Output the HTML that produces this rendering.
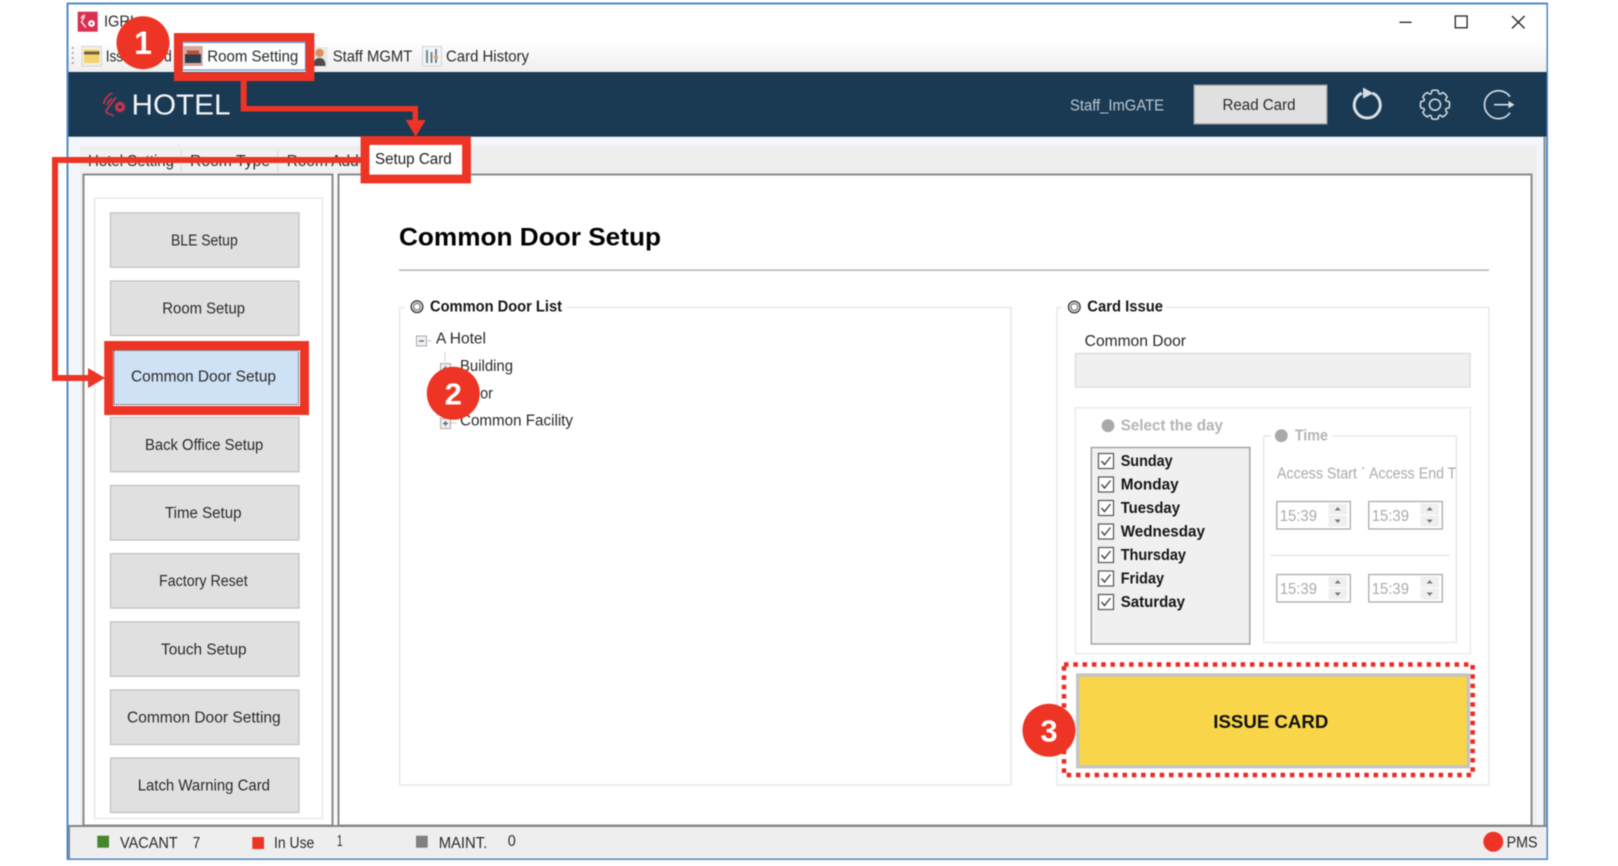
<!DOCTYPE html>
<html lang="en"><head><meta charset="utf-8"><title>Common Door Setup</title>
<style>
html,body{margin:0;padding:0;background:#fff;width:1618px;height:866px;overflow:hidden}
svg{display:block;filter:blur(.45px)}
text{font-family:"Liberation Sans","Noto Sans CJK KR",sans-serif;font-size:15.5px;fill:#2a2a2a}
.b{font-weight:bold;fill:#161616}
.g{fill:#aaa}
</style></head><body>
<svg width="1618" height="866" viewBox="0 0 1618 866" xmlns="http://www.w3.org/2000/svg">
<defs>
<linearGradient id="tb" x1="0" y1="0" x2="0" y2="1"><stop offset="0" stop-color="#fff"/><stop offset="1" stop-color="#eeeeee"/></linearGradient>
<clipPath id="tc"><rect x="1264" y="455" width="192" height="35"/></clipPath>
</defs>
<!-- window -->
<rect x="67.500" y="3.500" width="1479.500" height="855.500" fill="#f3f6fc" stroke="#4080c6" stroke-width="1.800"/>
<rect x="68.500" y="4.500" width="1478" height="37" fill="#fff"/>
<rect x="68.500" y="41" width="1478" height="31" fill="url(#tb)"/>
<rect x="68.500" y="72" width="1478" height="64.700" fill="#1a3a54"/>
<rect x="1543.500" y="137" width="2" height="688" fill="#8d8d8d"/>
<rect x="80" y="146" width="1456.700" height="679" fill="#eeeeee"/>
<!-- title bar -->
<rect x="77.700" y="11.700" width="20" height="20" fill="#d9304f"/>
<path d="M84.500 16.500l-3 5.500 4.500 5.500M81 18.500l2.500-3.500M84 15l1 .5" stroke="#fff" stroke-width="1.300" fill="none"/>
<circle cx="91.500" cy="23.500" r="3.400" fill="#fff"/><circle cx="91.500" cy="23.500" r="1.100" fill="#d9304f"/>
<text x="104" y="26.500" textLength="30" lengthAdjust="spacingAndGlyphs">IGRI</text>
<path d="M1399.400 22.300h12.200" stroke="#222" stroke-width="1.300"/>
<rect x="1455.300" y="16" width="11.800" height="11.800" fill="none" stroke="#222" stroke-width="1.300"/>
<path d="M1512 16l12.600 12.400M1524.600 16l-12.600 12.400" stroke="#222" stroke-width="1.300"/>
<!-- toolbar -->
<g fill="#aaa"><rect x="71.700" y="47" width="2" height="2"/><rect x="71.700" y="52" width="2" height="2"/><rect x="71.700" y="57" width="2" height="2"/><rect x="71.700" y="62" width="2" height="2"/></g>
<rect x="82" y="46.500" width="19.500" height="19.500" fill="#f4f1e2" stroke="#d5d5d5"/>
<rect x="84" y="49.500" width="15.500" height="13.500" fill="#f3d36b"/><rect x="84" y="51.500" width="15.500" height="3" fill="#6d6542"/>
<text x="105.700" y="61.500" textLength="66" lengthAdjust="spacingAndGlyphs">Issue Card</text>
<rect x="182.500" y="42.500" width="123" height="27.500" fill="#fdfeff" stroke="#5b9bd5" stroke-width="1.200"/>
<rect x="183.300" y="46" width="19.400" height="20" fill="#d9a89e"/>
<rect x="185" y="54" width="16" height="9" fill="#2c3e50"/><rect x="187" y="50.500" width="12" height="4" fill="#b4503c"/>
<text x="207.300" y="61.500" textLength="91" lengthAdjust="spacingAndGlyphs">Room Setting</text>
<rect x="312" y="47" width="15.500" height="19.500" fill="#e9e7e4"/>
<circle cx="319.500" cy="53" r="4.200" fill="#d9905c"/><path d="M313.500 66q0-8 6-8t6 8z" fill="#4c4a4e"/>
<text x="332.700" y="61.500" textLength="79.600" lengthAdjust="spacingAndGlyphs">Staff MGMT</text>
<rect x="422.500" y="46.500" width="19" height="19.500" fill="#f2f5f5" stroke="#d2d2d2"/>
<path d="M427 50v13M431.500 52v11M436 49v14" stroke="#5d7f90" stroke-width="1.800"/><circle cx="436" cy="57" r="2" fill="#e69a55"/>
<text x="446" y="61.500" textLength="83" lengthAdjust="spacingAndGlyphs">Card History</text>
<!-- header -->
<g fill="none" stroke="#c6334f" stroke-width="1.700">
<path d="M103.500 104q2-8 9-11M107 105q1.500-4 5-6.500"/>
<path d="M116 97l-9.500 13q-1 2.500 1.500 3.500l6 2.500"/>
</g>
<circle cx="120" cy="107" r="5.200" fill="#c6334f"/><circle cx="120" cy="107" r="1.800" fill="#1a3a54"/>
<text x="131.500" y="114.300" textLength="99" lengthAdjust="spacingAndGlyphs" style="font-size:29px;fill:#f1f4f6">HOTEL</text>
<text x="1070" y="110.500" textLength="94" lengthAdjust="spacingAndGlyphs" style="fill:#bcc7d0">Staff_ImGATE</text>
<rect x="1194.200" y="85.200" width="132.600" height="38.600" fill="#e0e0e0" stroke="#a8a8a8" stroke-width="1.300"/>
<text x="1222.500" y="109.800" textLength="73" lengthAdjust="spacingAndGlyphs">Read Card</text>
<path d="M1372.500 93.100A13 13 0 1 1 1362 93.100" fill="none" stroke="#d7dfe4" stroke-width="3"/>
<path d="M1363 87.500l10.500 5.800-10.500 5.200z" fill="#d7dfe4"/>
<g transform="translate(1435 104.700)" fill="none" stroke="#d7dfe4" stroke-width="1.500" stroke-linejoin="round">
<circle r="5.500"/>
<path d="M10.600-4.400Q11.500-3.200 14-3.300Q15.200 0 14 3.300Q11.500 3.200 10.600 4.400"/>
<path transform="rotate(45)" d="M10.600-4.400Q11.500-3.200 14-3.300Q15.200 0 14 3.300Q11.500 3.200 10.600 4.400"/>
<path transform="rotate(90)" d="M10.600-4.400Q11.500-3.200 14-3.300Q15.200 0 14 3.300Q11.500 3.200 10.600 4.400"/>
<path transform="rotate(135)" d="M10.600-4.400Q11.500-3.200 14-3.300Q15.200 0 14 3.300Q11.500 3.200 10.600 4.400"/>
<path transform="rotate(180)" d="M10.600-4.400Q11.500-3.200 14-3.300Q15.200 0 14 3.300Q11.500 3.200 10.600 4.400"/>
<path transform="rotate(225)" d="M10.600-4.400Q11.500-3.200 14-3.300Q15.200 0 14 3.300Q11.500 3.200 10.600 4.400"/>
<path transform="rotate(270)" d="M10.600-4.400Q11.500-3.200 14-3.300Q15.200 0 14 3.300Q11.500 3.200 10.600 4.400"/>
<path transform="rotate(315)" d="M10.600-4.400Q11.500-3.200 14-3.300Q15.200 0 14 3.300Q11.500 3.200 10.600 4.400"/>
</g>
<path d="M1510 96.700A14 14 0 1 0 1510 112.700" fill="none" stroke="#d7dfe4" stroke-width="1.600"/>
<path d="M1494 104.700h15" stroke="#d7dfe4" stroke-width="1.600"/><path d="M1508.500 101l6 3.700-6 3.700z" fill="#d7dfe4"/>
<!-- tabs -->
<rect x="81" y="150" width="280" height="23" fill="#f1f1f1"/>
<path d="M181.300 150v23M277.700 150v23" stroke="#dedede" stroke-width="1.200"/>
<text x="88" y="166" textLength="86" lengthAdjust="spacingAndGlyphs">Hotel Setting</text>
<text x="190" y="166" textLength="80" lengthAdjust="spacingAndGlyphs">Room Type</text>
<text x="286.700" y="166" textLength="72" lengthAdjust="spacingAndGlyphs">Room Add</text>
<!-- panels -->
<rect x="333" y="173" width="6" height="652" fill="#f8f8f8"/>
<rect x="83.500" y="174.500" width="249" height="651" fill="#fff" stroke="#868686" stroke-width="1.900"/>
<rect x="338.500" y="174.500" width="1193" height="651" fill="#fff" stroke="#868686" stroke-width="1.900"/>
<rect x="94.800" y="198" width="227.500" height="620.500" fill="#fff" stroke="#e6e6e6" stroke-width="1.300"/>
<!-- left buttons -->
<g fill="#e0e0e0" stroke="#c0c0c0" stroke-width="1.200">
<rect x="110.500" y="212.800" width="188.500" height="54.500"/>
<rect x="110.500" y="281" width="188.500" height="54.500"/>
<rect x="110.500" y="417.300" width="188.500" height="54.500"/>
<rect x="110.500" y="485.500" width="188.500" height="54.500"/>
<rect x="110.500" y="553.600" width="188.500" height="54.500"/>
<rect x="110.500" y="621.800" width="188.500" height="54.500"/>
<rect x="110.500" y="690" width="188.500" height="54.500"/>
<rect x="110.500" y="758" width="188.500" height="54.500"/>
</g>
<rect x="113.500" y="350" width="185.500" height="55" fill="#cfe2f5"/>
<rect x="114" y="350.500" width="184.500" height="54" fill="none" stroke="#333" stroke-width="1" stroke-dasharray="1 1"/>
<text x="171" y="245.500" textLength="66.700" lengthAdjust="spacingAndGlyphs">BLE Setup</text>
<text x="162.300" y="313.500" textLength="82.700" lengthAdjust="spacingAndGlyphs">Room Setup</text>
<text x="131" y="381.700" textLength="145" lengthAdjust="spacingAndGlyphs">Common Door Setup</text>
<text x="145" y="449.800" textLength="118.300" lengthAdjust="spacingAndGlyphs">Back Office Setup</text>
<text x="165" y="518" textLength="76.500" lengthAdjust="spacingAndGlyphs">Time Setup</text>
<text x="159" y="586" textLength="88.700" lengthAdjust="spacingAndGlyphs">Factory Reset</text>
<text x="161" y="654.300" textLength="85.600" lengthAdjust="spacingAndGlyphs">Touch Setup</text>
<text x="127" y="722.400" textLength="153.700" lengthAdjust="spacingAndGlyphs">Common Door Setting</text>
<text x="137.700" y="790.500" textLength="132.300" lengthAdjust="spacingAndGlyphs">Latch Warning Card</text>
<!-- heading -->
<text x="399" y="245.500" textLength="262" lengthAdjust="spacingAndGlyphs" class="b" style="font-size:25px;fill:#000">Common Door Setup</text>
<rect x="399" y="269.300" width="1090" height="1.700" fill="#bdbdbd"/>
<!-- common door list group -->
<rect x="399.800" y="307.500" width="611.200" height="477.500" fill="#fff" stroke="#e6e6e6" stroke-width="1.300"/>
<rect x="405" y="300" width="161" height="14" fill="#fff"/>
<circle cx="417" cy="306.700" r="5.800" fill="none" stroke="#444" stroke-width="1.500"/><circle cx="417" cy="306.700" r="3.400" fill="none" stroke="#777" stroke-width="1.300"/>
<text x="430" y="311.500" textLength="132" lengthAdjust="spacingAndGlyphs" class="b">Common Door List</text>
<rect x="416.500" y="336" width="10" height="10" fill="#f0f0f4" stroke="#a9a9a9"/><path d="M419 341h5" stroke="#556" stroke-width="1.200"/>
<path d="M428 341h4" stroke="#999" stroke-dasharray="1 1"/>
<text x="436" y="343.500" textLength="50" lengthAdjust="spacingAndGlyphs">A Hotel</text>
<path d="M445 352v10" stroke="#aaa" stroke-dasharray="1 1"/>
<rect x="440.500" y="363.500" width="10" height="10" fill="#f0f0f4" stroke="#a9a9a9"/><path d="M443 368.500h5M445.500 366v5" stroke="#556" stroke-width="1.200"/>
<text x="460" y="371" textLength="53" lengthAdjust="spacingAndGlyphs">Building</text>
<text x="460" y="398.500" textLength="33" lengthAdjust="spacingAndGlyphs">Floor</text>
<rect x="440.500" y="418.500" width="10" height="10" fill="#f0f0f4" stroke="#a9a9a9"/><path d="M443 423.500h5M445.500 421v5" stroke="#556" stroke-width="1.200"/>
<path d="M451 423h6" stroke="#999" stroke-dasharray="1 1"/>
<text x="460" y="425.500" textLength="113" lengthAdjust="spacingAndGlyphs">Common Facility</text>
<!-- card issue group -->
<rect x="1057" y="307.500" width="432" height="477.500" fill="#fff" stroke="#e6e6e6" stroke-width="1.300"/>
<rect x="1062" y="300" width="104" height="14" fill="#fff"/>
<circle cx="1074.300" cy="307" r="5.800" fill="none" stroke="#444" stroke-width="1.500"/><circle cx="1074.300" cy="307" r="3.400" fill="none" stroke="#777" stroke-width="1.300"/>
<text x="1087.300" y="311.500" textLength="75.700" lengthAdjust="spacingAndGlyphs" class="b">Card Issue</text>
<text x="1084.700" y="346" textLength="101.300" lengthAdjust="spacingAndGlyphs">Common Door</text>
<rect x="1075.500" y="353.500" width="394.500" height="33.500" fill="#f0f0f0" stroke="#e0e0e0" stroke-width="1.600"/>
<rect x="1075.300" y="407.800" width="395" height="246" fill="#fff" stroke="#e8e8e8" stroke-width="1.300"/>
<circle cx="1108" cy="425.700" r="6.400" fill="#a9a9a9"/>
<text x="1120.700" y="430.500" textLength="102.300" lengthAdjust="spacingAndGlyphs" class="b" style="fill:#b5b5b5">Select the day</text>
<rect x="1263.800" y="436" width="192.500" height="206.500" fill="#fff" stroke="#e6e6e6" stroke-width="1.300"/>
<rect x="1271" y="429" width="61" height="14" fill="#fff"/>
<circle cx="1281.300" cy="435.700" r="6.400" fill="#a9a9a9"/>
<text x="1294.700" y="440.500" textLength="33.300" lengthAdjust="spacingAndGlyphs" class="b" style="fill:#b5b5b5">Time</text>
<text x="1277" y="478.500" textLength="80" lengthAdjust="spacingAndGlyphs" class="g">Access Start</text>
<rect x="1362.500" y="467" width="1.200" height="2.500" fill="#aaa"/>
<text x="1369" y="478.500" textLength="90" lengthAdjust="spacingAndGlyphs" class="g" clip-path="url(#tc)">Access End Ti</text>
<rect x="1270.300" y="554.700" width="179.400" height="1.300" fill="#e3e3e3"/>
<!-- spinners -->
<g>
<rect x="1276.800" y="501.500" width="73.500" height="27.500" fill="#fff" stroke="#a5a5a5" stroke-width="1.200"/>
<rect x="1328.500" y="503.500" width="18.500" height="11" fill="#efefef"/><rect x="1328.500" y="515.500" width="18.500" height="11" fill="#efefef"/>
<path d="M1337.700 507l-3 3.500h6zM1337.700 523l-3-3.500h6z" fill="#777"/>
<text x="1279.700" y="521" textLength="37.300" lengthAdjust="spacingAndGlyphs" class="g">15:39</text>
</g>
<g>
<rect x="1368.800" y="501.500" width="73.500" height="27.500" fill="#fff" stroke="#a5a5a5" stroke-width="1.200"/>
<rect x="1420.500" y="503.500" width="18.500" height="11" fill="#efefef"/><rect x="1420.500" y="515.500" width="18.500" height="11" fill="#efefef"/>
<path d="M1429.700 507l-3 3.500h6zM1429.700 523l-3-3.500h6z" fill="#777"/>
<text x="1371.700" y="521" textLength="37.300" lengthAdjust="spacingAndGlyphs" class="g">15:39</text>
</g>
<g transform="translate(0 73)">
<rect x="1276.800" y="501.500" width="73.500" height="27.500" fill="#fff" stroke="#a5a5a5" stroke-width="1.200"/>
<rect x="1328.500" y="503.500" width="18.500" height="11" fill="#efefef"/><rect x="1328.500" y="515.500" width="18.500" height="11" fill="#efefef"/>
<path d="M1337.700 507l-3 3.500h6zM1337.700 523l-3-3.500h6z" fill="#777"/>
<text x="1279.700" y="521" textLength="37.300" lengthAdjust="spacingAndGlyphs" class="g">15:39</text>
</g>
<g transform="translate(0 73)">
<rect x="1368.800" y="501.500" width="73.500" height="27.500" fill="#fff" stroke="#a5a5a5" stroke-width="1.200"/>
<rect x="1420.500" y="503.500" width="18.500" height="11" fill="#efefef"/><rect x="1420.500" y="515.500" width="18.500" height="11" fill="#efefef"/>
<path d="M1429.700 507l-3 3.500h6zM1429.700 523l-3-3.500h6z" fill="#777"/>
<text x="1371.700" y="521" textLength="37.300" lengthAdjust="spacingAndGlyphs" class="g">15:39</text>
</g>
<!-- days -->
<rect x="1091.300" y="447.500" width="158.500" height="196.500" fill="#f0f0f0" stroke="#9aa1a8" stroke-width="1.400"/>
<g fill="#fff" stroke="#555" stroke-width="1.200">
<rect x="1098.500" y="453.500" width="15" height="15"/><rect x="1098.500" y="477" width="15" height="15"/><rect x="1098.500" y="500.500" width="15" height="15"/><rect x="1098.500" y="524" width="15" height="15"/><rect x="1098.500" y="547.500" width="15" height="15"/><rect x="1098.500" y="571" width="15" height="15"/><rect x="1098.500" y="594.500" width="15" height="15"/>
</g>
<g fill="none" stroke="#444" stroke-width="1.400">
<path d="M1101.500 461l3 3.500 6-7.500"/><path d="M1101.500 484.500l3 3.500 6-7.500"/><path d="M1101.500 508l3 3.500 6-7.500"/><path d="M1101.500 531.500l3 3.500 6-7.500"/><path d="M1101.500 555l3 3.500 6-7.500"/><path d="M1101.500 578.500l3 3.500 6-7.500"/><path d="M1101.500 602l3 3.500 6-7.500"/>
</g>
<text x="1120.700" y="466" textLength="52" lengthAdjust="spacingAndGlyphs" class="b">Sunday</text>
<text x="1120.700" y="489.500" textLength="58" lengthAdjust="spacingAndGlyphs" class="b">Monday</text>
<text x="1120.700" y="513" textLength="59.300" lengthAdjust="spacingAndGlyphs" class="b">Tuesday</text>
<text x="1120.700" y="536.500" textLength="84.300" lengthAdjust="spacingAndGlyphs" class="b">Wednesday</text>
<text x="1120.700" y="560" textLength="65.300" lengthAdjust="spacingAndGlyphs" class="b">Thursday</text>
<text x="1120.700" y="583.500" textLength="43.300" lengthAdjust="spacingAndGlyphs" class="b">Friday</text>
<text x="1120.700" y="607" textLength="64.300" lengthAdjust="spacingAndGlyphs" class="b">Saturday</text>
<!-- issue button -->
<rect x="1077.700" y="675" width="390.700" height="91.700" fill="#f9d649" stroke="#c4c4c4" stroke-width="3.300"/>
<text x="1213.300" y="728" textLength="115" lengthAdjust="spacingAndGlyphs" class="b" style="font-size:18px;fill:#111">ISSUE CARD</text>
<rect x="1064" y="664.500" width="408.700" height="110.500" fill="none" stroke="#ee2a24" stroke-width="4.500" stroke-dasharray="4.500 4.800"/>
<!-- status bar -->
<rect x="68.500" y="825" width="1478" height="33.500" fill="#eeeeee"/>
<rect x="68.500" y="825" width="1478" height="2" fill="#858585"/>
<rect x="68.500" y="825" width="1.500" height="33.500" fill="#858585"/>
<rect x="97.300" y="835.700" width="11.700" height="12" fill="#44862f"/>
<text x="120" y="848" textLength="57.700" lengthAdjust="spacingAndGlyphs">VACANT</text>
<text x="192.700" y="848" textLength="7.500" lengthAdjust="spacingAndGlyphs">7</text>
<rect x="252.300" y="837" width="11.700" height="12" fill="#ee3424"/>
<text x="274" y="848" textLength="40.300" lengthAdjust="spacingAndGlyphs">In Use</text>
<text x="337" y="846" textLength="5.500" lengthAdjust="spacingAndGlyphs">1</text>
<rect x="416" y="835.700" width="11.700" height="12" fill="#808080"/>
<text x="438.700" y="848" textLength="48.600" lengthAdjust="spacingAndGlyphs">MAINT.</text>
<text x="507.700" y="846" textLength="8" lengthAdjust="spacingAndGlyphs">0</text>
<circle cx="1493.300" cy="841.700" r="10" fill="#ee3424"/>
<text x="1506.600" y="847.500" textLength="31" lengthAdjust="spacingAndGlyphs">PMS</text>
<!-- annotations -->
<rect x="369" y="145" width="93" height="30" fill="#fff"/>
<g fill="none" stroke="#ee3424">
<rect x="178.300" y="37.400" width="131.700" height="39.300" stroke-width="8.700"/>
<rect x="365" y="140.500" width="101.500" height="38.500" stroke-width="8.800"/>
<rect x="108.700" y="345.500" width="195.800" height="65" stroke-width="9"/>
</g>
<path d="M240.700 80h6v26h171.300v16h-5.400v-10.500H240.700z" fill="#ee3424"/>
<path d="M405.700 120h20l-10 16.700z" fill="#ee3424"/>
<path d="M361 157H52v224h38v-6H58V163h303z" fill="#ee3424"/>
<path d="M88 368l17 10-17 10z" fill="#ee3424"/>
<circle cx="143" cy="42.700" r="26.500" fill="#ee3424"/>
<text x="143" y="54" text-anchor="middle" class="b" style="font-size:32px;fill:#fff">1</text>
<circle cx="453.300" cy="393.300" r="26.500" fill="#ee3424"/>
<text x="453.300" y="404.500" text-anchor="middle" class="b" style="font-size:31px;fill:#fff">2</text>
<circle cx="1049" cy="730.300" r="26.500" fill="#ee3424"/>
<text x="1049" y="741.500" text-anchor="middle" class="b" style="font-size:31px;fill:#fff">3</text>
<text x="375" y="164" textLength="76.700" lengthAdjust="spacingAndGlyphs" style="fill:#222">Setup Card</text>
</svg>
</body></html>
